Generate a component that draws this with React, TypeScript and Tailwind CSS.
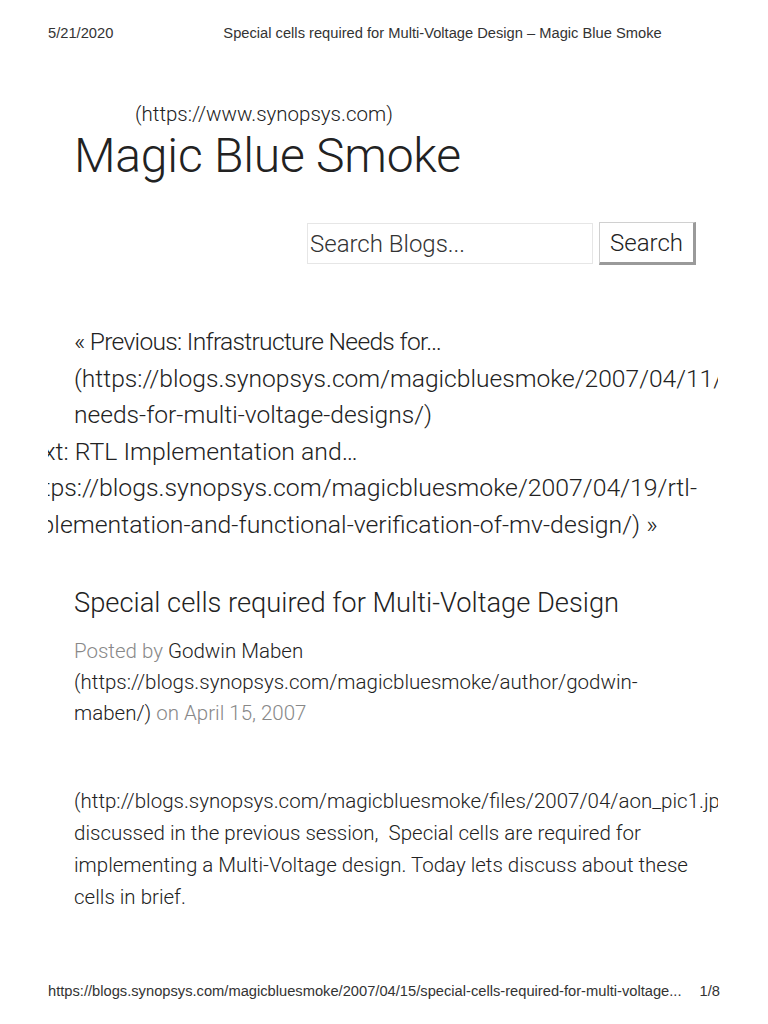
import type { FC } from "react";

const roboto = { fontFamily: "Roboto, 'Open Sans', sans-serif" };

const App: FC = () => {
  return (
    <div className="relative w-[768px] h-[1024px] bg-white text-[#222] overflow-hidden">
      {/* Print header */}
      <div className="flex items-center h-[66px] px-[48px] text-[14.7px] text-[#333] font-['Liberation_Sans',Arial,sans-serif]">
        <span>5/21/2020</span>
        <span className="ml-[110px]">Special cells required for Multi-Voltage Design – Magic Blue Smoke</span>
      </div>

      {/* Page body, clipped to the printable area */}
      <div className="mx-[48px] w-[670px] h-[900px] overflow-hidden font-light" style={roboto}>
        <div className="pl-[26px]">
          <p className="pl-[61px] mt-[34px] text-[20.5px] leading-[28px]">(https://www.synopsys.com)</p>
          <h1 className="text-[48px] leading-[56px] font-light tracking-[-0.2px]">Magic Blue Smoke</h1>

          {/* Search */}
          <div className="flex items-center mt-[38px] ml-[233px] gap-[6px]">
            <div className="w-[286px] h-[41px] border border-[#e6e6e6] flex items-center px-[2px] text-[24px] text-[#333]">
              Search Blogs...
            </div>
            <button className="w-[97px] h-[43px] border border-[#d0d0d0] border-r-[3px] border-b-[3px] border-r-[#9a9a9a] border-b-[#9a9a9a] bg-white text-[24px] text-[#222] flex items-center justify-center font-light">
              Search
            </button>
          </div>

          {/* Post navigation */}
          <div className="mt-[59px] text-[24.6px] leading-[36.5px] whitespace-nowrap">
            <div className="tracking-[-0.7px]">« Previous: Infrastructure Needs for…</div>
            <div>(https://blogs.synopsys.com/magicbluesmoke/2007/04/11/infrastructure-</div>
            <div>needs-for-multi-voltage-designs/)</div>
            <div className="-ml-[61px] text-[24.8px]">
              <div>Next: RTL Implementation and…</div>
              <div>(https://blogs.synopsys.com/magicbluesmoke/2007/04/19/rtl-</div>
              <div>implementation-and-functional-verification-of-mv-design/) »</div>
            </div>
          </div>

          {/* Post */}
          <h2 className="mt-[42px] text-[27.3px] leading-[36px] font-light whitespace-nowrap">
            Special cells required for Multi-Voltage Design
          </h2>
          <div className="mt-[15px] text-[20.5px] leading-[31px] whitespace-nowrap">
            <div>
              <span className="text-[#888]">Posted by </span>Godwin Maben
            </div>
            <div>(https://blogs.synopsys.com/magicbluesmoke/author/godwin-</div>
            <div>
              maben/)<span className="text-[#888]"> on April 15, 2007</span>
            </div>
          </div>

          <div className="mt-[56px] text-[20.5px] leading-[32px] whitespace-nowrap">
            <div>(http://blogs.synopsys.com/magicbluesmoke/files/2007/04/aon_pic1.jpg) As</div>
            <div>discussed in the previous session,&nbsp; Special cells are required for</div>
            <div>implementing a Multi-Voltage design. Today lets discuss about these</div>
            <div>cells in brief.</div>
          </div>
        </div>
      </div>

      {/* Print footer */}
      <div className="absolute left-0 right-0 top-[980px] flex items-center justify-between px-[48px] text-[14.7px] text-[#333] font-['Liberation_Sans',Arial,sans-serif]">
        <span>https://blogs.synopsys.com/magicbluesmoke/2007/04/15/special-cells-required-for-multi-voltage...</span>
        <span>1/8</span>
      </div>
    </div>
  );
};

export default App;
